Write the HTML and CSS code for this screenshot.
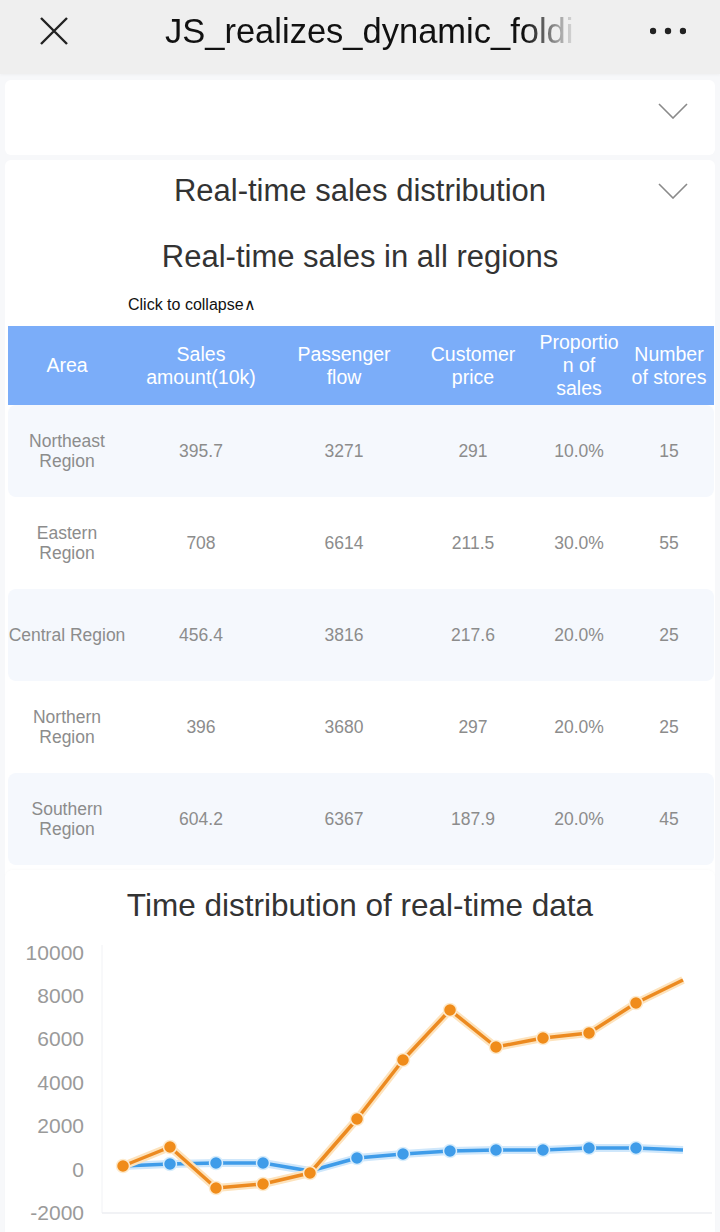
FILE: index.html
```html
<!DOCTYPE html>
<html lang="en">
<head>
  <meta charset="UTF-8">
  <meta name="viewport" content="width=device-width, initial-scale=1.0">
  <title>JS_realizes_dynamic_folding</title>
  <link rel="stylesheet" href="styles.css">
</head>
<body>
  <!-- Barra superior -->
  <div class="topbar">
    <svg class="close-icon" viewBox="0 0 28 28">
      <path d="M1 1 L27 27 M27 1 L1 27" stroke="#222" stroke-width="2.4" fill="none"/>
    </svg>
    <div class="bar-title">JS_realizes_dynamic_foldi</div>
    <svg class="more-icon" viewBox="0 0 36 8">
      <circle cx="3" cy="4" r="3.2" fill="#222"/>
      <circle cx="18" cy="4" r="3.2" fill="#222"/>
      <circle cx="33" cy="4" r="3.2" fill="#222"/>
    </svg>
  </div>

  <div class="content">
    <!-- Painel fechado -->
    <div class="panel panel-collapsed">
      <div class="panel-head">
        <svg class="chevron" viewBox="0 0 30 16"><polyline points="1,1 15,15 29,1" fill="none" stroke="#8a8a8a" stroke-width="1.6"/></svg>
      </div>
    </div>

    <!-- Painel aberto -->
    <div class="panel">
      <div class="panel-head">
        <div class="panel-title">Real-time sales distribution</div>
        <svg class="chevron" viewBox="0 0 30 16"><polyline points="1,1 15,15 29,1" fill="none" stroke="#8a8a8a" stroke-width="1.6"/></svg>
      </div>

      <div class="sub-title">Real-time sales in all regions</div>
      <div class="collapse-link">Click to collapse∧</div>

      <table class="sales-table">
        <colgroup>
          <col class="col-area">
          <col class="col-sales">
          <col class="col-flow">
          <col class="col-price">
          <col class="col-share">
          <col class="col-stores">
        </colgroup>
        <thead>
          <tr>
            <th>Area</th>
            <th>Sales amount(10k)</th>
            <th>Passenger flow</th>
            <th>Customer price</th>
            <th>Proportion of sales</th>
            <th>Number of stores</th>
          </tr>
        </thead>
        <tbody>
          <tr>
            <td>Northeast Region</td><td>395.7</td><td>3271</td><td>291</td><td>10.0%</td><td>15</td>
          </tr>
          <tr>
            <td>Eastern Region</td><td>708</td><td>6614</td><td>211.5</td><td>30.0%</td><td>55</td>
          </tr>
          <tr>
            <td>Central Region</td><td>456.4</td><td>3816</td><td>217.6</td><td>20.0%</td><td>25</td>
          </tr>
          <tr>
            <td>Northern Region</td><td>396</td><td>3680</td><td>297</td><td>20.0%</td><td>25</td>
          </tr>
          <tr>
            <td>Southern Region</td><td>604.2</td><td>6367</td><td>187.9</td><td>20.0%</td><td>45</td>
          </tr>
        </tbody>
      </table>

      <!-- Grafico -->
      <div class="chart-panel">
        <div class="chart-title">Time distribution of real-time data</div>
        <svg class="chart" viewBox="5 925 710 320">
          <line x1="102" y1="945" x2="102" y2="1213" stroke="#f1f2f5" stroke-width="1"/>
          <line x1="102" y1="1213" x2="712" y2="1213" stroke="#eceef2" stroke-width="1.5"/>

          <g class="axis-label">
            <text x="84" y="960">10000</text>
            <text x="84" y="1003">8000</text>
            <text x="84" y="1046">6000</text>
            <text x="84" y="1090">4000</text>
            <text x="84" y="1133">2000</text>
            <text x="84" y="1177">0</text>
            <text x="84" y="1220">-2000</text>
          </g>

          <!-- linha azul -->
          <polyline class="halo-blue" points="123,1166 170,1164 216,1163 263,1163 310,1171 357,1158 403,1154 450,1151 496,1150 543,1150 589,1148 636,1148 683,1150"/>
          <polyline class="line-blue" points="123,1166 170,1164 216,1163 263,1163 310,1171 357,1158 403,1154 450,1151 496,1150 543,1150 589,1148 636,1148 683,1150"/>
          <g class="dot-blue">
            <circle cx="170" cy="1164" r="6.5"/>
            <circle cx="216" cy="1163" r="6.5"/>
            <circle cx="263" cy="1163" r="6.5"/>
            <circle cx="357" cy="1158" r="6.5"/>
            <circle cx="403" cy="1154" r="6.5"/>
            <circle cx="450" cy="1151" r="6.5"/>
            <circle cx="496" cy="1150" r="6.5"/>
            <circle cx="543" cy="1150" r="6.5"/>
            <circle cx="589" cy="1148" r="6.5"/>
            <circle cx="636" cy="1148" r="6.5"/>
          </g>

          <!-- linha laranja -->
          <polyline class="halo-orange" points="123,1166 170,1147 216,1188 263,1184 310,1173 357,1119 403,1060 450,1010 496,1047 543,1038 589,1033 636,1003 683,980"/>
          <polyline class="line-orange" points="123,1166 170,1147 216,1188 263,1184 310,1173 357,1119 403,1060 450,1010 496,1047 543,1038 589,1033 636,1003 683,980"/>
          <g class="dot-orange">
            <circle cx="123" cy="1166" r="6.5"/>
            <circle cx="170" cy="1147" r="6.5"/>
            <circle cx="216" cy="1188" r="6.5"/>
            <circle cx="263" cy="1184" r="6.5"/>
            <circle cx="310" cy="1173" r="6.5"/>
            <circle cx="357" cy="1119" r="6.5"/>
            <circle cx="403" cy="1060" r="6.5"/>
            <circle cx="450" cy="1010" r="6.5"/>
            <circle cx="496" cy="1047" r="6.5"/>
            <circle cx="543" cy="1038" r="6.5"/>
            <circle cx="589" cy="1033" r="6.5"/>
            <circle cx="636" cy="1003" r="6.5"/>
          </g>
        </svg>
      </div>
    </div>
  </div>
</body>
</html>
```

FILE: styles.css
```css
/* Estilo do corpo */
body {
  margin: 0;
  padding: 0;
  font-family: "Liberation Sans", Arial, sans-serif;
  background-color: #f7f8fa;
}

/* Barra superior */
.topbar {
  height: 74px;
  box-sizing: border-box;
  padding: 0 34px 12px 40px;
  display: flex;
  align-items: center;
  background-color: #efefef;
  box-shadow: 0 1px 3px rgba(0, 0, 0, 0.04);
}

.close-icon {
  width: 28px;
  height: 28px;
  flex-shrink: 0;
}

.bar-title {
  margin-left: 97px;
  width: 410px;
  font-size: 34.5px;
  color: #111;
  white-space: nowrap;
  overflow: hidden;
  -webkit-mask-image: linear-gradient(to right, #000 360px, rgba(0, 0, 0, 0.15) 405px);
  mask-image: linear-gradient(to right, #000 360px, rgba(0, 0, 0, 0.15) 405px);
}

.more-icon {
  margin-left: auto;
  width: 36px;
  height: 8px;
}

.content {
  padding: 6px 5px;
}

/* Paineis */
.panel {
  background-color: #fff;
  border-radius: 6px;
  margin-bottom: 5px;
}

.panel-collapsed {
  padding-bottom: 13px;
}

.panel-head {
  height: 62px;
  display: grid;
  grid-template-columns: 1fr auto 1fr;
  align-items: center;
}

.panel-title {
  grid-column: 2;
  font-size: 31px;
  color: #333;
}

.chevron {
  grid-column: 3;
  justify-self: end;
  margin-right: 27px;
  width: 30px;
  height: 16px;
}

.sub-title {
  margin-top: 10px;
  line-height: 50px;
  text-align: center;
  font-size: 31px;
  color: #333;
}

.collapse-link {
  margin: 12px 0 10px 123px;
  line-height: 22px;
  font-size: 16px;
  color: #111;
}

/* Tabela */
.sales-table {
  width: 706px;
  margin-left: 3px;
  border-collapse: separate;
  border-spacing: 0;
  table-layout: fixed;
}

.col-area { width: 118px; }
.col-sales { width: 150px; }
.col-flow { width: 136px; }
.col-price { width: 122px; }
.col-share { width: 90px; }
.col-stores { width: 90px; }

.sales-table th {
  height: 79px;
  padding: 0 4px;
  background-color: #7badf9;
  color: #fff;
  font-weight: normal;
  font-size: 19.5px;
  line-height: 23px;
  overflow-wrap: anywhere;
}

.sales-table td {
  height: 92px;
  padding: 0;
  text-align: center;
  color: #8c8c8c;
  font-size: 17.5px;
  line-height: 20px;
}

.sales-table tbody tr:nth-child(odd) td {
  background-color: #f5f8fd;
}

.sales-table tbody td:first-child {
  border-radius: 8px 0 0 8px;
}

.sales-table tbody td:last-child {
  border-radius: 0 8px 8px 0;
}

/* Grafico */
.chart-panel {
  margin-top: 5px;
  padding-top: 15px;
  background-color: #fff;
  border-radius: 8px;
  box-shadow: 0 -1px 3px rgba(0, 0, 0, 0.02);
}

.chart-title {
  line-height: 40px;
  text-align: center;
  font-size: 31.5px;
  color: #333;
}

.chart {
  display: block;
  width: 710px;
  height: 320px;
}

.axis-label text {
  font-family: "Liberation Sans", Arial, sans-serif;
  font-size: 21px;
  fill: #9a9a9a;
  text-anchor: end;
}

.halo-blue, .halo-orange, .line-blue, .line-orange {
  fill: none;
  stroke-linejoin: round;
}

.halo-blue {
  stroke: #cfe7fb;
  stroke-width: 8;
}

.line-blue {
  stroke: #3f9ce9;
  stroke-width: 3.5;
}

.halo-orange {
  stroke: #fde3bd;
  stroke-width: 8;
}

.line-orange {
  stroke: #ec8a20;
  stroke-width: 3.5;
}

.dot-blue circle {
  fill: #3f9ce9;
  stroke: #d8edfc;
  stroke-width: 1.5;
}

.dot-orange circle {
  fill: #f08c1a;
  stroke: #fdebcf;
  stroke-width: 1.5;
}
```
